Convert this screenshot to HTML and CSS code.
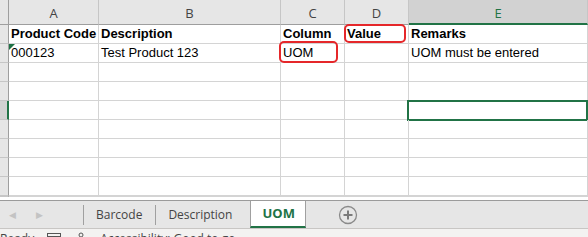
FILE: index.html
```html
<!DOCTYPE html>
<html lang="en">
<head>
    <meta charset="UTF-8">
    <title>UOM - Excel</title>
    <link rel="stylesheet" href="styles.css">
</head>
<body>
    <div class="sheet">
        <div class="grid">
            <div class="corner"></div>
            <div class="colhead">A</div>
            <div class="colhead">B</div>
            <div class="colhead">C</div>
            <div class="colhead">D</div>
            <div class="colhead active">E</div>

            <div class="rowhead"></div>
            <div class="cell bold">Product Code</div>
            <div class="cell bold">Description</div>
            <div class="cell bold">Column</div>
            <div class="cell bold">Value</div>
            <div class="cell bold">Remarks</div>

            <div class="rowhead"></div>
            <div class="cell tick">000123</div>
            <div class="cell">Test Product 123</div>
            <div class="cell">UOM</div>
            <div class="cell"></div>
            <div class="cell">UOM must be entered</div>

            <div class="rowhead"></div><div class="cell"></div><div class="cell"></div><div class="cell"></div><div class="cell"></div><div class="cell"></div>
            <div class="rowhead"></div><div class="cell"></div><div class="cell"></div><div class="cell"></div><div class="cell"></div><div class="cell"></div>
            <div class="rowhead active"></div><div class="cell"></div><div class="cell"></div><div class="cell"></div><div class="cell"></div><div class="cell selected"></div>
            <div class="rowhead"></div><div class="cell"></div><div class="cell"></div><div class="cell"></div><div class="cell"></div><div class="cell"></div>
            <div class="rowhead"></div><div class="cell"></div><div class="cell"></div><div class="cell"></div><div class="cell"></div><div class="cell"></div>
            <div class="rowhead"></div><div class="cell"></div><div class="cell"></div><div class="cell"></div><div class="cell"></div><div class="cell"></div>
            <div class="rowhead"></div><div class="cell"></div><div class="cell"></div><div class="cell"></div><div class="cell"></div><div class="cell"></div>
            <div class="rowhead"></div><div class="cell"></div><div class="cell"></div><div class="cell"></div><div class="cell"></div><div class="cell"></div>
        </div>
        <!-- annotation boxes drawn over the sheet -->
        <div class="mark mark-uom"></div>
        <div class="mark mark-value"></div>
    </div>

    <div class="tabbar">
        <div class="nav">
            <span class="arrow">&#9664;</span>
            <span class="arrow">&#9654;</span>
        </div>
        <div class="sep"></div>
        <div class="tab">Barcode</div>
        <div class="sep"></div>
        <div class="tab">Description</div>
        <div class="tab current">UOM</div>
        <div class="add">
            <svg width="20" height="20" viewBox="0 0 20 20">
                <circle cx="10" cy="10" r="8.5" fill="none" stroke="#8a8a8a" stroke-width="1.3"/>
                <path d="M10 5.5v9M5.5 10h9" stroke="#7a7a7a" stroke-width="2"/>
            </svg>
        </div>
    </div>

    <div class="statusbar">
        <span class="status-text">Ready</span>
        <svg class="status-icon" width="16" height="14" viewBox="0 0 16 14">
            <rect x="1.5" y="1.5" width="13" height="11" fill="none" stroke="#555"/>
            <path d="M1.5 4.5h13" stroke="#555"/>
        </svg>
        <svg class="status-icon" width="14" height="14" viewBox="0 0 14 14">
            <circle cx="7" cy="3" r="2" fill="none" stroke="#555"/>
            <path d="M2 6h10M7 6v7" stroke="#555"/>
        </svg>
        <span class="status-text">Accessibility: Good to go</span>
    </div>
</body>
</html>
```

FILE: styles.css
```css
* {
    box-sizing: border-box;
}
body {
    margin: 0;
    width: 588px;
    height: 237px;
    overflow: hidden;
    background: #fff;
    font-family: "Liberation Sans", Arial, sans-serif;
}
.sheet {
    position: relative;
    height: 200px;
    overflow: hidden;
}
.grid {
    display: grid;
    grid-template-columns: 9px 90px 182px 64px 64px 1fr;
    grid-template-rows: 25px repeat(9, 19px);
}
.corner {
    background: #e6e6e6;
    border-right: 1px solid #9e9e9e;
    border-bottom: 1px solid #9e9e9e;
}
.colhead {
    background: #e6e6e6;
    border-right: 1px solid #c6c6c6;
    border-bottom: 1px solid #9e9e9e;
    color: #444;
    font-family: "Open Sans", sans-serif;
    font-size: 13px;
    text-align: center;
    line-height: 24px;
    padding-top: 1px;
}
.colhead.active {
    background: #d2d2d2;
    color: #217346;
    border-bottom: 2px solid #217346;
}
.rowhead {
    background: #e6e6e6;
    border-right: 1px solid #9e9e9e;
    border-bottom: 1px solid #c6c6c6;
}
.rowhead.active {
    background: #d2d2d2;
    border-right: 2px solid #217346;
}
.cell {
    position: relative;
    border-right: 1px solid #d4d4d4;
    border-bottom: 1px solid #d4d4d4;
    padding: 0 2px;
    font-size: 13px;
    line-height: 18px;
    color: #000;
    white-space: nowrap;
}
.bold {
    font-weight: bold;
}
.tick::before {
    content: "";
    position: absolute;
    left: 0;
    top: 0;
    border-top: 6px solid #1e7145;
    border-right: 6px solid transparent;
}
.selected {
    border: 2px solid #217346;
    margin: -1px 0 -1px -2px;
}
.mark {
    position: absolute;
    border: 2px solid #e5272a;
    border-radius: 5px;
}
.mark-uom {
    left: 279px;
    top: 41px;
    width: 59px;
    height: 22px;
}
.mark-value {
    left: 344px;
    top: 24px;
    width: 62px;
    height: 19px;
}
.tabbar {
    display: flex;
    align-items: center;
    height: 28px;
    background: #e6e6e6;
    border-top: 1px solid #9b9b9b;
    font-family: "Open Sans", sans-serif;
    font-size: 12px;
    color: #444;
}
.nav {
    display: flex;
    gap: 20px;
    width: 83px;
    padding-left: 9px;
}
.arrow {
    font-size: 9px;
    color: #c3c3c3;
}
.sep {
    width: 1px;
    height: 20px;
    background: #a0a0a0;
}
.tab {
    padding: 0 13px 0 12px;
    line-height: 26px;
}
.tab.current {
    align-self: stretch;
    margin-left: 5px;
    padding: 0 10px 0 11px;
    background: #fff;
    border-left: 1px solid #a0a0a0;
    border-right: 1px solid #a0a0a0;
    border-bottom: 2px solid #217346;
    color: #217346;
    font-weight: bold;
    font-size: 13px;
    line-height: 24px;
}
.add {
    display: flex;
    margin-left: 32px;
}
.statusbar {
    display: flex;
    align-items: flex-start;
    gap: 12px;
    height: 9px;
    overflow: hidden;
    background: #f3f2f1;
    border-top: 1px solid #c8c6c4;
    padding: 3px 0 0 0;
    font-family: "Open Sans", sans-serif;
    font-size: 12px;
    color: #444;
}
.status-text {
    line-height: 14px;
}
```
